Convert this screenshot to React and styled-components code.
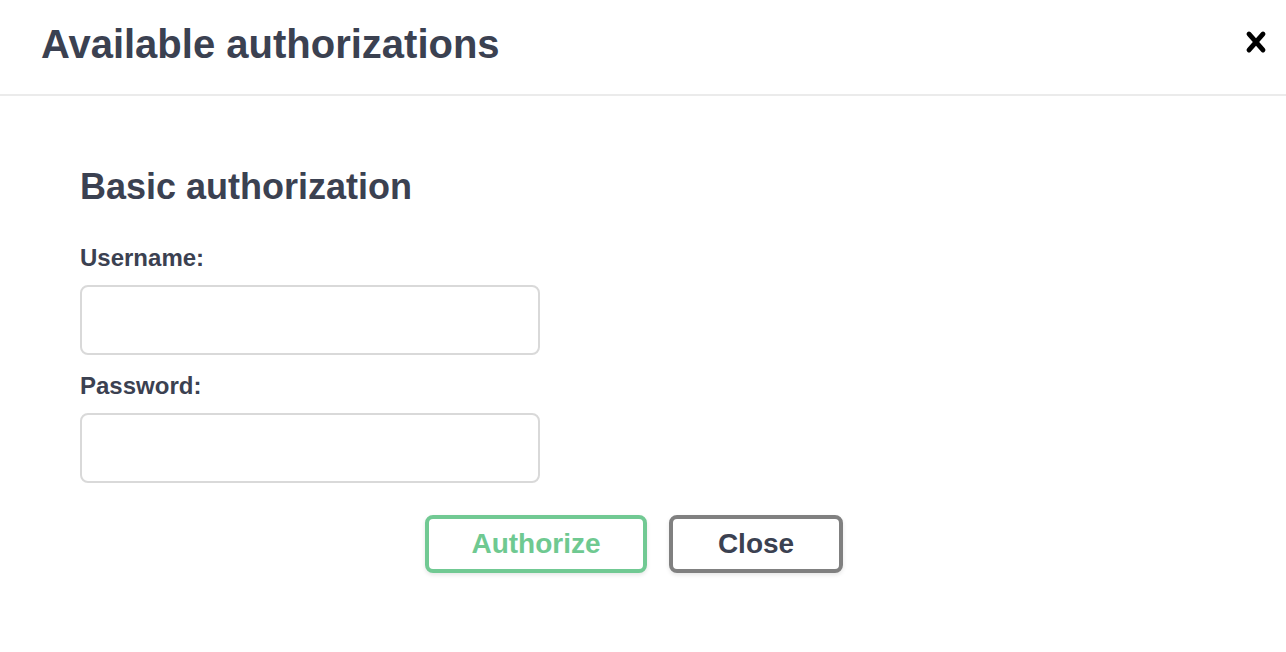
import styled, { createGlobalStyle } from "styled-components"

// Swagger-style "Available authorizations" dialog, drawn at 2x scale.

const Global = createGlobalStyle`
    html, body {
        margin: 0;
        background: #fff;
        font-family: "Liberation Sans", Arial, sans-serif;
        color: #3b4151;
    }
`

const Modal = styled.div`
    width: 1286px;
    min-height: 652px;
    background: #fff;
`

const Header = styled.div`
    display: flex;
    align-items: center;
    justify-content: space-between;
    height: 96px;
    box-sizing: border-box;
    padding: 0 10px 6px 41px;
    border-bottom: 2px solid #ebebeb;
`

const Title = styled.h3`
    margin: 0;
    font-size: 40px;
    font-weight: 700;
    color: #3b4151;
`

const CloseIcon = styled.button`
    display: flex;
    padding: 0;
    margin: 0 0 4px;
    border: none;
    background: none;
    cursor: pointer;
`

const Body = styled.div`
    padding: 70px 80px 0;
`

const Heading = styled.h4`
    margin: 0 0 36px;
    font-size: 36px;
    line-height: 42px;
    font-weight: 700;
    color: #3b4151;
`

const Label = styled.label`
    display: block;
    margin: 0 0 13px;
    font-size: 24px;
    line-height: 28px;
    font-weight: 700;
    color: #3b4151;
`

const Input = styled.input`
    display: block;
    width: 460px;
    height: 70px;
    box-sizing: border-box;
    margin: 0 0 ${p => p.$gap}px;
    padding: 10px 20px;
    border: 2px solid #d9d9d9;
    border-radius: 8px;
    background: #fff;
    font-size: 24px;
    font-family: inherit;
    outline: none;
`

const Buttons = styled.div`
    display: flex;
    justify-content: center;
    gap: 22px;
    padding-right: 18px;
`

const Button = styled.button`
    width: ${p => p.$width}px;
    height: 58px;
    box-sizing: border-box;
    border: 4px solid ${p => p.$border};
    border-radius: 8px;
    background: #fff;
    color: ${p => p.$color};
    font-family: inherit;
    font-size: 28px;
    font-weight: 700;
    box-shadow: 0 2px 4px rgba(0, 0, 0, 0.1);
    cursor: pointer;
`

const App = () => {
    return (
        <Modal>
            <Global />
            <Header>
                <Title>Available authorizations</Title>
                <CloseIcon aria-label="Close">
                    <svg width="40" height="40" viewBox="0 0 20 20" aria-hidden="true">
                        <path
                            fill="#000"
                            d="M14.348 14.849a1.2 1.2 0 0 1-1.697 0L10 11.819l-2.651 3.029a1.2 1.2 0 1 1-1.697-1.697l2.758-3.15-2.759-3.152a1.2 1.2 0 1 1 1.697-1.697L10 8.183l2.651-3.031a1.2 1.2 0 1 1 1.697 1.697l-2.758 3.152 2.758 3.15a1.2 1.2 0 0 1 0 1.698z"
                        />
                    </svg>
                </CloseIcon>
            </Header>
            <Body>
                <Heading>Basic authorization</Heading>
                <Label>Username:</Label>
                <Input type="text" $gap={17} />
                <Label>Password:</Label>
                <Input type="password" $gap={32} />
                <Buttons>
                    <Button $width={222} $border="#71c993" $color="#6fc991">Authorize</Button>
                    <Button $width={174} $border="#808080" $color="#3b4151">Close</Button>
                </Buttons>
            </Body>
        </Modal>
    )
}

export default App
